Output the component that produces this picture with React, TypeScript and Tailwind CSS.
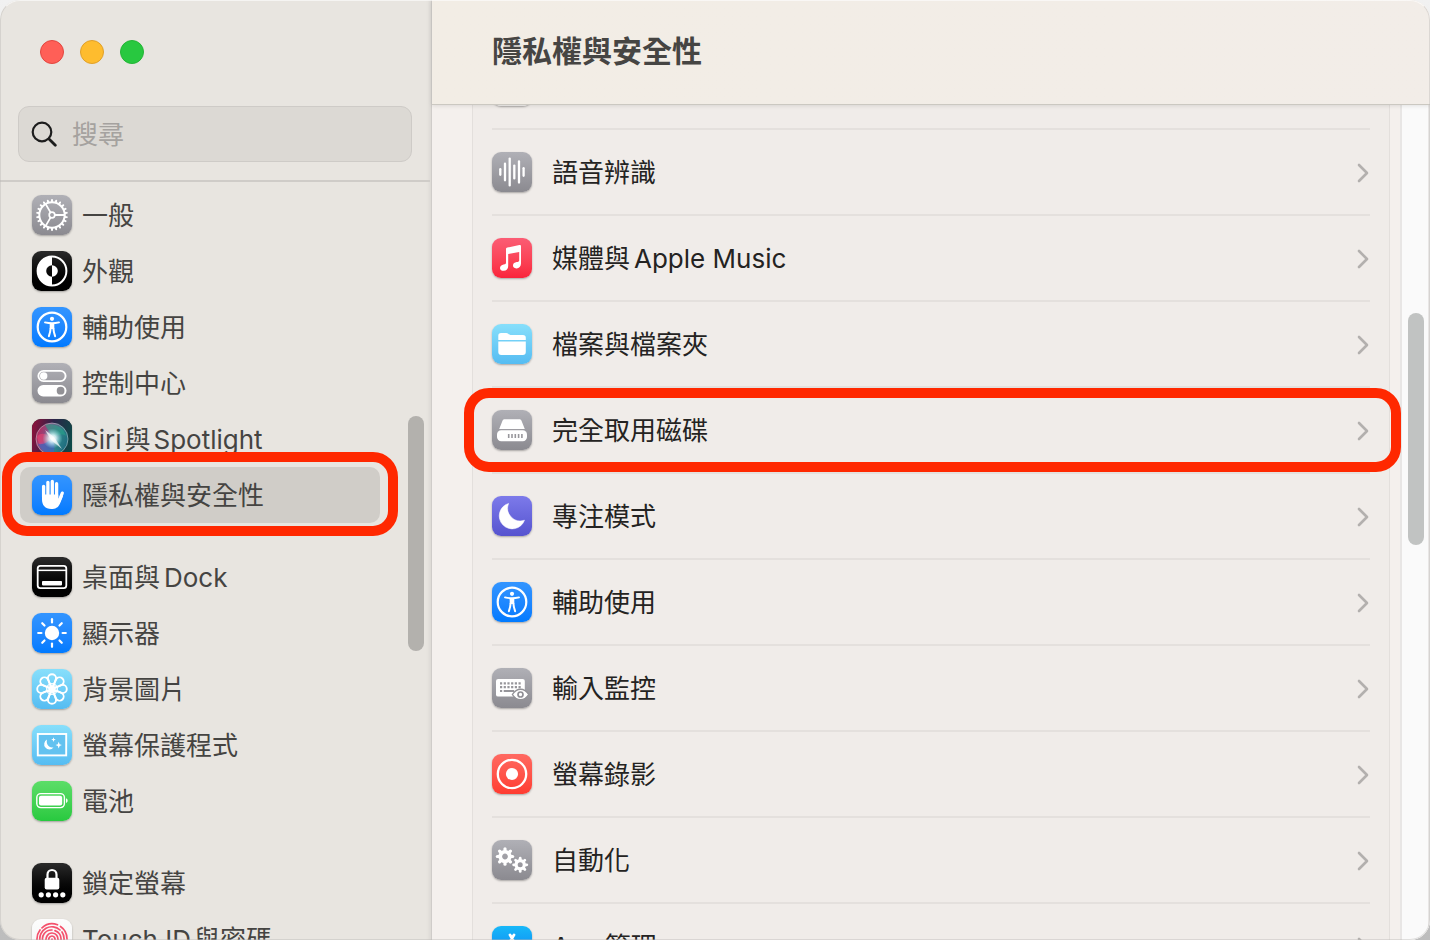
import { type ReactNode } from 'react'
import clsx from 'clsx'

const GRAY = 'from-[#b0b0b6] to-[#8b8a90]'
const BLACK = 'from-[#2b2b2b] to-[#000000]'
const BLUE = 'from-[#3395ff] to-[#007aff]'
const SKY = 'from-[#87dffb] to-[#55bcf2]'

type Entry = {
  name: ReactNode
  icon: ReactNode
  tint: string
  marked?: boolean
}

function spokes(count: number) {
  return Array.from({ length: count }, (_, i) => (360 / count) * i)
}

/* ---------- glyphs, all on a 40x40 grid ---------- */

function GearGlyph() {
  return (
    <g fill="none" stroke="#fff" strokeLinecap="round">
      <circle cx="20" cy="20" r="12.7" strokeWidth="2" />
      {spokes(22).map((a) => (
        <path key={a} d="M20 6.600V5.100" strokeWidth="2" transform={`rotate(${a} 20 20)`} />
      ))}
      <circle cx="20" cy="20" r="2.8" strokeWidth="1.7" />
      {[90, 210, 330].map((a) => (
        <path key={a} d="M20 17V7.400" strokeWidth="1.8" transform={`rotate(${a} 20 20)`} />
      ))}
    </g>
  )
}

function AppearanceGlyph() {
  return (
    <g fill="#fff">
      <circle cx="20" cy="20" r="14.4" fill="none" stroke="#fff" strokeWidth="2" />
      <path d="M20 5.500v8.700a5.800 5.800 0 0 0 0 11.600v8.700a14.500 14.500 0 0 1 0-29z" />
      <path d="M20 14.200a5.800 5.800 0 0 1 0 11.600z" />
    </g>
  )
}

function AccessibilityGlyph() {
  return (
    <g fill="#fff">
      <circle cx="20" cy="20" r="14.300" fill="none" stroke="#fff" strokeWidth="2.200" />
      <circle cx="20" cy="11.800" r="2.100" />
      <path d="M20 16.300V22" fill="none" stroke="#fff" strokeWidth="4.600" />
      <path
        d="M13 15.400c4.700 1.100 9.300 1.100 14 0"
        fill="none"
        stroke="#fff"
        strokeWidth="1.900"
        strokeLinecap="round"
      />
      <path
        d="M18.600 21.500c-.2 2.800-.8 5.200-1.700 7.700M21.400 21.500c.2 2.800.8 5.200 1.700 7.700"
        fill="none"
        stroke="#fff"
        strokeWidth="2"
        strokeLinecap="round"
      />
    </g>
  )
}

function TogglesGlyph() {
  return (
    <g fill="#fff">
      <rect x="6.400" y="7.900" width="27.200" height="10.200" rx="5.100" fill="none" stroke="#fff" strokeWidth="1.900" />
      <circle cx="11.700" cy="13" r="3.700" />
      <rect x="5.500" y="22" width="29" height="11.400" rx="5.700" />
      <circle cx="28.600" cy="27.700" r="3.900" fill="#929196" />
    </g>
  )
}

function SiriGlyph() {
  return (
    <g>
      <defs>
        <linearGradient id="siriBack" x1="0" y1="0.4" x2="1" y2="0.6">
          <stop offset="0" stopColor="#86123c" />
          <stop offset="0.45" stopColor="#2c2348" />
          <stop offset="1" stopColor="#0d4a48" />
        </linearGradient>
        <linearGradient id="siriOrb" x1="0" y1="0.3" x2="1" y2="0.7">
          <stop offset="0" stopColor="#c72b62" />
          <stop offset="0.35" stopColor="#8a5f92" />
          <stop offset="0.7" stopColor="#2f8f93" />
          <stop offset="1" stopColor="#1d6f86" />
        </linearGradient>
        <radialGradient id="siriGlow">
          <stop offset="0" stopColor="#fff" />
          <stop offset="0.35" stopColor="#e6fcff" stopOpacity="0.85" />
          <stop offset="1" stopColor="#8ee8ee" stopOpacity="0" />
        </radialGradient>
      </defs>
      <rect width="40" height="40" rx="9" fill="url(#siriBack)" />
      <circle cx="20" cy="20" r="16" fill="url(#siriOrb)" opacity="0.85" />
      <path d="M13 6c7-3 18 1 21 11-4-3-9-1-13 2z" fill="#27a388" opacity="0.6" />
      <path d="M6 25c5-2 10-4 15-4 2 5 2 10 0 14-7 0-12-4-15-10z" fill="#3f66c4" opacity="0.65" />
      <path d="M5 18c3-5 9-4 15 1-4 4-9 7-13 6z" fill="#ef4473" opacity="0.6" />
      <circle cx="20" cy="20" r="16" fill="none" stroke="#d9e6e8" strokeOpacity="0.45" />
      <circle cx="20.500" cy="19.500" r="10" fill="url(#siriGlow)" />
      <path d="M13 11l9 7 8 12-11-9z" fill="#fff" opacity="0.7" />
    </g>
  )
}

function HandGlyph() {
  return (
    <g fill="none" stroke="#fff" strokeLinecap="round" strokeLinejoin="round">
      <path d="M11.600 11.300V22M15.900 7.300V21M20.300 6.400V21M24.600 8.700V22" strokeWidth="3.300" />
      <path d="M30.300 18.100L26.600 27" strokeWidth="3.200" />
      <path
        d="M10 19.500h16.200l.2 4.200 2.800-3.300 1.800.9-3.100 7.400c-1.700 3.900-4.600 5.300-8.600 5.300-6.200 0-9.300-4-9.300-9.500z"
        fill="#fff"
        stroke="none"
      />
    </g>
  )
}

function DockGlyph() {
  return (
    <g fill="#fff">
      <rect x="5.700" y="8.900" width="28.600" height="22.200" rx="2.600" fill="none" stroke="#fff" strokeWidth="1.800" />
      <path d="M6 12.600h28v1.500H6z" />
      <rect x="10" y="24" width="20" height="4.400" rx="0.800" />
    </g>
  )
}

function SunGlyph() {
  return (
    <g fill="#fff">
      <circle cx="20" cy="20" r="7.200" />
      {spokes(8).map((a) => (
        <path
          key={a}
          d="M20 9.400V6.200"
          stroke="#fff"
          strokeWidth="2.200"
          strokeLinecap="round"
          transform={`rotate(${a} 20 20)`}
        />
      ))}
    </g>
  )
}

function FlowerGlyph() {
  return (
    <g fill="none" stroke="#fff" strokeWidth="1.900">
      {spokes(8).map((a) => (
        <path
          key={a}
          d="M20 18.500C18.400 15 15.900 12.500 15.900 9.300a4.100 4.100 0 0 1 8.200 0C24.100 12.500 21.600 15 20 18.500z"
          transform={`rotate(${a} 20 20)`}
        />
      ))}
      <circle cx="20" cy="20" r="5.400" strokeWidth="1.200" />
    </g>
  )
}

function ScreenSaverGlyph() {
  return (
    <g fill="#fff">
      <rect x="5.800" y="9" width="28.400" height="21.400" fill="#63c2f0" stroke="#fff" strokeWidth="1.900" />
      <path d="M15 14.600a5.200 5.200 0 1 0 6.500 7.800c-4.300 1.200-7.700-3-6.500-7.800z" />
      <path d="M21.500 12.200l.6 1.800 1.700.6-1.700.6-.6 1.800-.6-1.800-1.700-.6 1.700-.6zM26.700 16.700l.9 2.500 2.300.8-2.300.9-.9 2.500-.9-2.500-2.300-.9 2.300-.8z" />
    </g>
  )
}

function BatteryGlyph() {
  return (
    <g fill="#fff">
      <rect x="4.800" y="12.600" width="27.600" height="14" rx="4" fill="none" stroke="#fff" strokeWidth="1.400" />
      <rect x="7" y="14.800" width="23.200" height="9.600" rx="2" />
      <path d="M34 17.300c2.200.8 2.200 3.800 0 4.600z" />
    </g>
  )
}

function LockGlyph() {
  return (
    <g fill="#fff">
      <rect x="12.700" y="14.800" width="14.600" height="11.700" rx="2" />
      <path d="M15.500 15.500v-4a4.500 4.500 0 0 1 9 0v4" fill="none" stroke="#fff" strokeWidth="2.200" />
      {[9.2, 16.4, 23.6, 30.8].map((x) => (
        <circle key={x} cx={x} cy="31.800" r="2.600" />
      ))}
    </g>
  )
}

function FingerprintGlyph() {
  return (
    <g fill="none" stroke="#f4516c" strokeWidth="1.700" strokeLinecap="round">
      <path d="M10 8.800a15 15 0 0 1 15.500-3M28.500 7.500a15 15 0 0 1 6.500 12.500M5 21a15 15 0 0 1 3-10" />
      <path d="M8 22a12 12 0 0 1 20-11M30 13a12 12 0 0 1 2 8" />
      <path d="M11 23a9 9 0 0 1 9-12M23 11.600a9 9 0 0 1 6 9.400" />
      <path d="M14 24c-1-6 2-10 6-10s6.500 3 6 9" />
      <path d="M17 25c-1-5 0-8 3-8s3.500 3 3 8" />
      <path d="M20 20v6" />
    </g>
  )
}

function WaveGlyph() {
  const bars = [
    [8.3, 2.8],
    [13, 8.3],
    [17.7, 13.4],
    [22.3, 6.4],
    [27, 10.6],
    [31.6, 3.8],
  ]
  return (
    <g stroke="#fff" strokeWidth="2.300" strokeLinecap="round">
      {bars.map(([x, h]) => (
        <path key={x} d={`M${x} ${20 - h}V${20 + h}`} />
      ))}
    </g>
  )
}

function MusicGlyph() {
  return (
    <g fill="#fff">
      <path d="M14 11.300c0-.9.500-1.500 1.400-1.700l12-2.500c.9-.2 1.600.300 1.600 1.200v17.100c0 3.200-2 4.700-4.300 5-2.200.2-3.700-1-3.700-2.800 0-2.100 1.600-3.100 3.700-3.500 1.800-.4 2.500-.5 2.500-1.900v-8.300l-11 2.200v11.800c0 3-1.900 4.600-4.400 4.900-2.200.2-3.800-1-3.800-2.900 0-2 1.600-3 3.600-3.500 1.800-.4 2.400-.6 2.400-2z" />
    </g>
  )
}

function FolderGlyph() {
  return (
    <g fill="#fff">
      <path d="M6.300 16v-4.200c0-1.900.9-2.800 2.800-2.800h5c2.200 0 2.600 1.900 4.500 1.900h12.300c2 0 2.900 1 2.900 2.800V16z" />
      <path d="M6.300 17.400h27.500V28c0 2-1 3-3 3H9.300c-2 0-3-1-3-3z" />
    </g>
  )
}

function DriveGlyph() {
  return (
    <g fill="#fff">
      <path d="M12.700 9.200h14.600c1.200 0 1.900.6 2.300 1.700l3.200 8H7.200l3.200-8c.4-1.100 1.100-1.700 2.300-1.700z" />
      <rect x="5" y="20.300" width="30" height="10.900" rx="4.200" />
      <path d="M16.700 24v4M20 24v4M23.300 24v4M26.600 24v4M29.900 24v4" stroke="#98979c" strokeWidth="1.600" />
    </g>
  )
}

function MoonGlyph() {
  return (
    <path
      d="M16.600 7.400A13 13 0 1 0 32.500 24.200 12.700 12.700 0 0 1 16.600 7.400z"
      fill="#fff"
      stroke="#fff"
      strokeWidth="0.500"
      strokeLinejoin="round"
    />
  )
}

function KeyboardGlyph() {
  return (
    <g fill="#fff">
      <rect x="4" y="10.900" width="28.800" height="17.700" rx="2.200" />
      <path
        d="M8 15.400h21M8 19.200h21"
        stroke="#97969b"
        strokeWidth="2.200"
        strokeDasharray="2.200 1.500"
      />
      <path d="M8 23.100h2.200M11.700 23.100h10.500" stroke="#97969b" strokeWidth="2" />
      <path
        d="M20.400 26.500c4.400-7 11.900-7 16.300 0-4.400 7-11.900 7-16.300 0z"
        stroke="#929196"
        strokeWidth="1.400"
      />
      <circle cx="28.500" cy="26.500" r="2.500" fill="none" stroke="#8f8e94" strokeWidth="1.700" />
    </g>
  )
}

function RecordGlyph() {
  return (
    <g fill="#fff">
      <circle cx="20" cy="20" r="14.200" fill="none" stroke="#fff" strokeWidth="2.300" />
      <circle cx="20" cy="20" r="6.100" />
    </g>
  )
}

function Cog({ x, y, r }: { x: number; y: number; r: number }) {
  return (
    <g transform={`translate(${x} ${y})`} stroke="#fff" fill="none">
      <circle r={r * 0.54} strokeWidth={r * 0.42} />
      {spokes(8).map((a) => (
        <path
          key={a}
          d={`M0 ${-r * 0.65}V${-r * 0.87}`}
          strokeWidth={r * 0.36}
          strokeLinecap="round"
          transform={`rotate(${a})`}
        />
      ))}
    </g>
  )
}

function CogsGlyph() {
  return (
    <g>
      <Cog x={13} y={16.5} r={8.8} />
      <Cog x={28.2} y={24.8} r={7.6} />
    </g>
  )
}

function AppStoreGlyph() {
  return (
    <g stroke="#fff" strokeWidth="2.800" strokeLinecap="round">
      <path d="M18 8.900L29.500 29M22 8.900L11 28M8 24.500h14M27 24.500h5" />
    </g>
  )
}

/* ---------- data ---------- */

const sidebarGroups: Entry[][] = [
  [
    { name: '一般', icon: <GearGlyph />, tint: GRAY },
    { name: '外觀', icon: <AppearanceGlyph />, tint: BLACK },
    { name: '輔助使用', icon: <AccessibilityGlyph />, tint: BLUE },
    { name: '控制中心', icon: <TogglesGlyph />, tint: GRAY },
    {
      name: (
        <>
          Siri<span className="mx-[3px]">與</span>Spotlight
        </>
      ),
      icon: <SiriGlyph />,
      tint: BLACK,
    },
    { name: '隱私權與安全性', icon: <HandGlyph />, tint: BLUE, marked: true },
  ],
  [
    {
      name: (
        <>
          <span className="mr-1">桌面與</span>Dock
        </>
      ),
      icon: <DockGlyph />,
      tint: BLACK,
    },
    { name: '顯示器', icon: <SunGlyph />, tint: BLUE },
    { name: '背景圖片', icon: <FlowerGlyph />, tint: SKY },
    { name: '螢幕保護程式', icon: <ScreenSaverGlyph />, tint: SKY },
    { name: '電池', icon: <BatteryGlyph />, tint: 'from-[#5bdd68] to-[#27c93f]' },
  ],
  [
    { name: '鎖定螢幕', icon: <LockGlyph />, tint: BLACK },
    {
      name: (
        <>
          Touch ID<span className="ml-[3px]">與密碼</span>
        </>
      ),
      icon: <FingerprintGlyph />,
      tint: 'from-[#fdfdfd] to-[#f1f1f1]',
    },
  ],
]

const privacyRows: Entry[] = [
  { name: '', icon: null, tint: 'from-[#fdfdfd] to-[#eeecea]' },
  { name: '語音辨識', icon: <WaveGlyph />, tint: GRAY },
  {
    name: (
      <>
        <span className="mr-1">媒體與</span>Apple Music
      </>
    ),
    icon: <MusicGlyph />,
    tint: 'from-[#fb5c74] to-[#fa233b]',
  },
  { name: '檔案與檔案夾', icon: <FolderGlyph />, tint: SKY },
  { name: '完全取用磁碟', icon: <DriveGlyph />, tint: GRAY, marked: true },
  { name: '專注模式', icon: <MoonGlyph />, tint: 'from-[#7d7aea] to-[#5653cf]' },
  { name: '輔助使用', icon: <AccessibilityGlyph />, tint: BLUE },
  { name: '輸入監控', icon: <KeyboardGlyph />, tint: GRAY },
  { name: '螢幕錄影', icon: <RecordGlyph />, tint: 'from-[#ff6961] to-[#ff3b30]' },
  { name: '自動化', icon: <CogsGlyph />, tint: GRAY },
  {
    name: (
      <>
        App<span className="ml-[3px]">管理</span>
      </>
    ),
    icon: <AppStoreGlyph />,
    tint: 'from-[#18b8f8] to-[#1a72f0]',
  },
]

/* ---------- pieces ---------- */

function Tile({ tint, children }: { tint: string; children: ReactNode }) {
  return (
    <span
      className={clsx(
        'h-10 w-10 shrink-0 rounded-[9px] bg-linear-to-b shadow-[0_1px_2px_rgba(0,0,0,0.3)]',
        tint
      )}
    >
      <svg viewBox="0 0 40 40" className="h-10 w-10" aria-hidden="true">
        {children}
      </svg>
    </span>
  )
}

function Chevron() {
  return (
    <svg viewBox="0 0 14 20" className="mt-0.5 h-5 w-3.5 shrink-0" aria-hidden="true">
      <path
        d="M3 2L11 10L3 18"
        fill="none"
        stroke="#b3b0ae"
        strokeWidth="2.600"
        strokeLinecap="round"
        strokeLinejoin="round"
      />
    </svg>
  )
}

function Sidebar() {
  return (
    <aside className="relative flex w-[432px] shrink-0 flex-col border-r border-[#cfccc9] bg-[#e8e5e0] shadow-[inset_-4px_0_4px_-3px_rgba(0,0,0,0.08)]">
      <div className="flex gap-4 px-10 pt-10">
        <button
          aria-label="關閉"
          className="h-6 w-6 rounded-full border border-[#e2463f] bg-[#ff5f57]"
        />
        <button
          aria-label="縮到最小"
          className="h-6 w-6 rounded-full border border-[#e0a02a] bg-[#febc2e]"
        />
        <button
          aria-label="縮放"
          className="h-6 w-6 rounded-full border border-[#24b536] bg-[#28c840]"
        />
      </div>

      <label className="mt-[42px] mr-[19px] ml-[18px] flex h-14 shrink-0 items-center gap-[15px] rounded-[11px] border border-[#cecbc7] bg-[#dcd9d4] px-3">
        <svg viewBox="0 0 26 26" className="h-[26px] w-[26px] shrink-0" aria-hidden="true">
          <g fill="none" stroke="#1d1d1d" strokeLinecap="round">
            <circle cx="11" cy="11" r="9.300" strokeWidth="2.200" />
            <path d="M18 18L24.300 24.300" strokeWidth="2.800" />
          </g>
        </svg>
        <input
          type="search"
          aria-label="搜尋"
          placeholder="搜尋"
          className="min-w-0 flex-1 bg-transparent pt-0.5 text-[26px] leading-8 outline-none placeholder:text-[#a5a29f]"
        />
      </label>

      <div className="mt-[18px] mr-px h-0.5 shrink-0 bg-[#cfccc8]" />

      <nav className="relative min-h-0 flex-1 overflow-hidden pt-[5px] pr-[51px] pl-5">
        <div className="flex flex-col gap-[26px]">
          {sidebarGroups.map((group, g) => (
            <ul key={g}>
              {group.map((item, i) => (
                <li key={i} className="relative">
                  <button
                    className={clsx(
                      'flex h-14 w-full items-center gap-2.5 rounded-[10px] px-3 text-left text-[26px] leading-8 whitespace-nowrap text-[#454442]',
                      item.marked && 'bg-[#d0cdc8]'
                    )}
                  >
                    <Tile tint={item.tint}>{item.icon}</Tile>
                    <span className="pt-0.5">{item.name}</span>
                  </button>
                  {item.marked && (
                    <div className="pointer-events-none absolute -inset-x-[18px] -top-[15px] -bottom-[13px] rounded-[25px] border-10 border-[#ff2800]" />
                  )}
                </li>
              ))}
            </ul>
          ))}
        </div>
        <div className="absolute top-[234px] right-[7px] h-[235px] w-4 rounded-full bg-[#b3b1ad]" />
      </nav>
    </aside>
  )
}

function PrivacyPane() {
  return (
    <main className="flex min-w-0 flex-1 flex-col bg-[#f4f0ed]">
      <header className="relative z-10 flex h-[105px] shrink-0 items-center border-b border-[#cbc8c1] bg-linear-to-r from-[#f2ede5] to-[#f2ede8] px-[60px] pb-0.5 shadow-[0_1px_4px_rgba(0,0,0,0.1)]">
        <h1 className="text-[30px] leading-9 font-bold text-[#464543]">隱私權與安全性</h1>
      </header>

      <div className="relative flex min-h-0 flex-1 overflow-hidden">
        <div className="-mt-[61px] ml-10 min-w-0 flex-1 border-x border-[#e3dfdc] bg-[#f0ece9] px-[19px]">
          <ul className="divide-y-2 divide-[#e4e0dd]">
            {privacyRows.map((row, i) => (
              <li key={i} className="relative">
                <button className="flex h-[84px] w-full items-center gap-5 text-left text-[26px] leading-8 whitespace-nowrap text-[#242322]">
                  <Tile tint={row.tint}>{row.icon}</Tile>
                  <span className="flex-1 pt-0.5">{row.name}</span>
                  <Chevron />
                </button>
                {row.marked && (
                  <div className="pointer-events-none absolute inset-y-0 -right-[31px] -left-7 z-10 rounded-[25px] border-10 border-[#ff2800]" />
                )}
              </li>
            ))}
          </ul>
        </div>
        <div className="ml-2.5 w-[30px] shrink-0 border-x-2 border-[#e8e6e5] bg-[#fafafa]" />
        <div className="absolute top-[208px] right-1.5 h-[232px] w-4 rounded-full bg-[#c1c3c2]" />
      </div>
    </main>
  )
}

export default function App() {
  return (
    <div className="h-screen bg-linear-to-b from-[#f1f1f1] to-[#bdbdbd]">
      <div
        lang="zh-Hant"
        className="relative flex h-full overflow-hidden rounded-[20px] font-['Inter','Noto_Sans_CJK_TC',sans-serif]"
      >
        <Sidebar />
        <PrivacyPane />
        <div className="pointer-events-none absolute inset-0 z-20 rounded-[20px] border border-[#bab8b5]/40 border-t-white/60" />
      </div>
    </div>
  )
}
